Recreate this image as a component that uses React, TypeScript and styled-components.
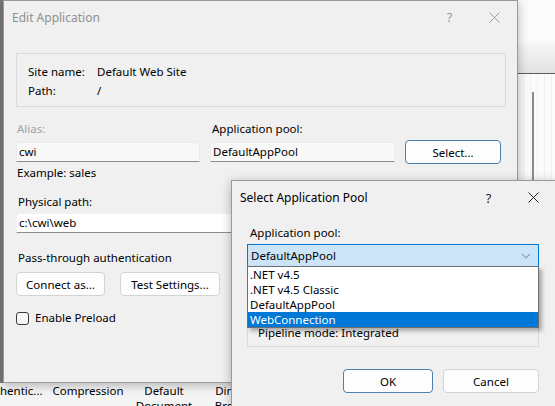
import styled, { createGlobalStyle } from "styled-components";

const GlobalStyle = createGlobalStyle`
    body {
        margin:0;
        font-family:"Noto Sans", "Open Sans", sans-serif;
        font-size:11.5px;
        color:#000;
    }
`;

const Desktop = styled.div`
    position:relative;
    width:555px;
    height:406px;
    overflow:hidden;
    background:#f4f4f4;
`;

/* the IIS manager window behind the dialogs */
const BackWindow = styled.div`
    display:flex;
    flex-direction:column;
    height:100%;
`;

const BackTop = styled.div`
    flex:1;
    display:flex;
    justify-content:flex-end;
    border-left:3px solid #7a7a7a;
`;

const RightPane = styled.div`
    width:38px;
    display:flex;
    flex-direction:column;
    background:#fbfbfb;
`;

const PaneSpacer = styled.div`
    height:43px;
`;

const ColumnHeader = styled.div`
    height:30px;
    background:linear-gradient(#f6f6f6, #e2e2e2);
    border-bottom:1px solid #5e5e5e;
`;

const ColumnBody = styled.div`
    flex:1;
    padding-left:15px;
    background:repeating-linear-gradient(90deg, #fbfbfb 0 6px, #f1f1f1 6px 7px);
`;

const Splitter = styled.div`
    width:2px;
    height:88px;
    margin-top:18px;
    background:#8a8a8a;
`;

const FeatureRow = styled.div`
    display:flex;
    height:23px;
    margin-left:-26px;
    background:#f4f4f4;
`;

const Feature = styled.div`
    width:76px;
    flex:none;
    text-align:center;
    line-height:15px;
`;

/* dialog windows */
const Dialog = styled.div<{ $left: number; $top: number; $width: number; $height: number }>`
    position:absolute;
    left:${(p) => p.$left}px;
    top:${(p) => p.$top}px;
    width:${(p) => p.$width}px;
    height:${(p) => p.$height}px;
    box-sizing:border-box;
    display:flex;
    flex-direction:column;
    background:#f0f0f0;
    border:1px solid #9a9a9a;
    box-shadow:0 2px 10px rgba(0,0,0,0.28);
`;

const TitleBar = styled.div<{ $height: number; $inactive?: boolean }>`
    height:${(p) => p.$height}px;
    flex:none;
    display:flex;
    align-items:center;
    padding-left:8px;
    font-size:12px;
    color:${(p) => (p.$inactive ? "#8f8f8f" : "#000")};
`;

const TitleText = styled.div`
    flex:1;
`;

const CaptionButton = styled.div<{ $inactive?: boolean }>`
    width:45px;
    height:100%;
    display:flex;
    align-items:center;
    justify-content:center;
    color:${(p) => (p.$inactive ? "#9a9a9a" : "#222")};
    font-size:13px;
`;

const Body = styled.div<{ $pad: string }>`
    display:flex;
    flex-direction:column;
    padding:${(p) => p.$pad};
`;

const GroupBox = styled.div<{ $pad: string }>`
    padding:${(p) => p.$pad};
    border:1px solid #dadada;
    display:grid;
    grid-template-columns:69px auto;
    line-height:19px;
`;

const Label = styled.div<{ $mt?: number; $disabled?: boolean; $indent?: number }>`
    margin-top:${(p) => p.$mt ?? 0}px;
    padding-left:${(p) => p.$indent ?? 1}px;
    line-height:16px;
    color:${(p) => (p.$disabled ? "#a2a2a2" : "#000")};
`;

const FieldGrid = styled.div`
    margin-top:14px;
    display:grid;
    grid-template-columns:184px 185px 96px;
    column-gap:10px;
    row-gap:3px;
    align-items:center;
`;

const Input = styled.div<{ $readonly?: boolean; $width?: number; $mt?: number }>`
    box-sizing:border-box;
    height:20px;
    margin-top:${(p) => p.$mt ?? 0}px;
    width:${(p) => (p.$width ? `${p.$width}px` : "auto")};
    padding:0 2px;
    line-height:18px;
    background:${(p) => (p.$readonly ? "#f8f8f8" : "#fff")};
    border:1px solid ${(p) => (p.$readonly ? "#ececec" : "#f0f0f0")};
    border-bottom-color:#8c8c8c;
    border-radius:3px 3px 0 0;
    white-space:nowrap;
`;

const Button = styled.div<{ $width: number; $primary?: boolean }>`
    box-sizing:border-box;
    width:${(p) => p.$width}px;
    height:24px;
    display:flex;
    align-items:center;
    justify-content:center;
    background:#fdfdfd;
    border:1px solid ${(p) => (p.$primary ? "#4f7fae" : "#d3d3d3")};
    border-radius:4px;
    flex:none;
`;

const ButtonRow = styled.div<{ $mt: number; $gap: number; $end?: boolean }>`
    margin-top:${(p) => p.$mt}px;
    display:flex;
    gap:${(p) => p.$gap}px;
    justify-content:${(p) => (p.$end ? "flex-end" : "flex-start")};
`;

const CheckRow = styled.div`
    margin-top:14px;
    display:flex;
    align-items:center;
    gap:6px;
    line-height:16px;
`;

const CheckBox = styled.div`
    width:13px;
    height:13px;
    box-sizing:border-box;
    border:1px solid #3c3c3c;
    border-radius:3px;
    background:#f6f6f6;
`;

/* combo box with its open list */
const Combo = styled.div`
    position:relative;
    margin-top:3px;
    box-sizing:border-box;
    height:23px;
    display:flex;
    align-items:center;
    padding:0 7px 0 3px;
    background:#cce4f7;
    border:1px solid #0078d7;
`;

const ComboText = styled.div`
    flex:1;
`;

const DropList = styled.div`
    position:absolute;
    left:-1px;
    right:-1px;
    top:100%;
    z-index:2;
    background:#fff;
    border:1px solid #6e6e6e;
    box-shadow:3px 3px 4px rgba(0,0,0,0.3);
`;

const Option = styled.div<{ $selected?: boolean }>`
    height:15px;
    line-height:15px;
    padding-left:2px;
    background:${(p) => (p.$selected ? "#0078d7" : "transparent")};
    color:${(p) => (p.$selected ? "#fff" : "#000")};
`;

const PropBox = styled.div`
    margin-top:35px;
    padding:22px 10px 5px;
    border:1px solid #dadada;
    line-height:16px;
`;

const pools = [".NET v4.5", ".NET v4.5 Classic", "DefaultAppPool", "WebConnection"];

function Chevron() {
    return (
        <svg width="10" height="6" viewBox="0 0 10 6">
            <path d="M1 1 L5 5 L9 1" fill="none" stroke="#8aa2b8" strokeWidth="1.2" />
        </svg>
    );
}

function CloseGlyph({ color }: { color: string }) {
    return (
        <svg width="11" height="11" viewBox="0 0 11 11">
            <path d="M0.5 0.5 L10.5 10.5 M10.5 0.5 L0.5 10.5" stroke={color} strokeWidth="1" />
        </svg>
    );
}

function App() {
    return (
        <Desktop>
            <GlobalStyle />
            <BackWindow>
                <BackTop>
                    <RightPane>
                        <PaneSpacer />
                        <ColumnHeader />
                        <ColumnBody>
                            <Splitter />
                        </ColumnBody>
                    </RightPane>
                </BackTop>
                <FeatureRow>
                    <Feature>Authentic...</Feature>
                    <Feature>Compression</Feature>
                    <Feature>Default Document</Feature>
                    <Feature>Directory Browsing</Feature>
                </FeatureRow>
            </BackWindow>

            <Dialog $left={3} $top={0} $width={515} $height={383}>
                <TitleBar $height={32} $inactive>
                    <TitleText>Edit Application</TitleText>
                    <CaptionButton $inactive>?</CaptionButton>
                    <CaptionButton $inactive>
                        <CloseGlyph color="#9a9a9a" />
                    </CaptionButton>
                </TitleBar>
                <Body $pad="20px 11px 0 12px">
                    <GroupBox $pad="8px 11px 6px">
                        <div>Site name:</div>
                        <div>Default Web Site</div>
                        <div>Path:</div>
                        <div>/</div>
                    </GroupBox>
                    <FieldGrid>
                        <Label $disabled>Alias:</Label>
                        <Label $indent={2}>Application pool:</Label>
                        <div />
                        <Input $readonly>cwi</Input>
                        <Input $readonly>DefaultAppPool</Input>
                        <Button $width={96} $primary>Select...</Button>
                    </FieldGrid>
                    <Label $mt={1}>Example: sales</Label>
                    <Label $mt={13} $indent={2}>Physical path:</Label>
                    <Input $width={379} $mt={3}>c:\cwi\web</Input>
                    <Label $mt={17} $indent={2}>Pass-through authentication</Label>
                    <ButtonRow $mt={6} $gap={15}>
                        <Button $width={89}>Connect as...</Button>
                        <Button $width={100}>Test Settings...</Button>
                    </ButtonRow>
                    <CheckRow>
                        <CheckBox />
                        <span>Enable Preload</span>
                    </CheckRow>
                </Body>
            </Dialog>

            <Dialog $left={231} $top={180} $width={326} $height={232}>
                <TitleBar $height={33}>
                    <TitleText>Select Application Pool</TitleText>
                    <CaptionButton>?</CaptionButton>
                    <CaptionButton>
                        <CloseGlyph color="#222" />
                    </CaptionButton>
                </TitleBar>
                <Body $pad="11px 17px 0 15px">
                    <Label $indent={3}>Application pool:</Label>
                    <Combo>
                        <ComboText>DefaultAppPool</ComboText>
                        <Chevron />
                        <DropList>
                            {pools.map((p) => (
                                <Option key={p} $selected={p === "WebConnection"}>
                                    {p}
                                </Option>
                            ))}
                        </DropList>
                    </Combo>
                    <PropBox>
                        <div>Pipeline mode: Integrated</div>
                    </PropBox>
                    <ButtonRow $mt={22} $gap={10} $end>
                        <Button $width={90} $primary>OK</Button>
                        <Button $width={96}>Cancel</Button>
                    </ButtonRow>
                </Body>
            </Dialog>
        </Desktop>
    );
}

export default App;
